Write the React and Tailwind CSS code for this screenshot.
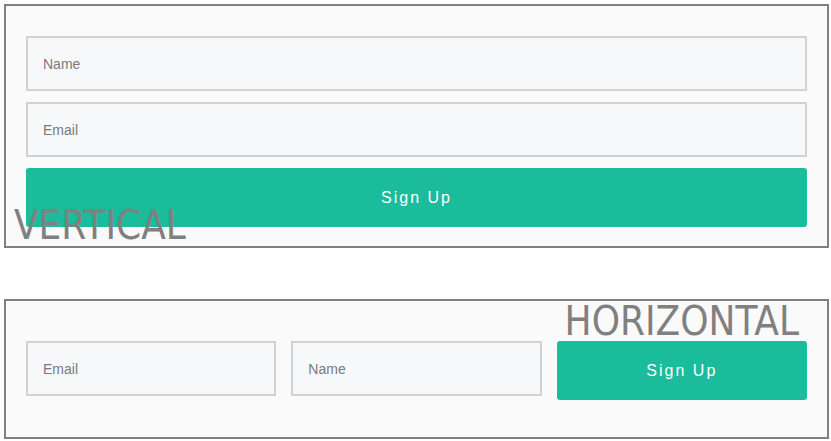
import React from "react";

const inputCls =
  "block w-full h-[55px] border-2 border-[#d1d1d1] bg-[#f7f8fa] px-[15px] text-[14px] text-[#555] outline-none placeholder:text-[#7a7a7a]";

const buttonCls =
  "block w-full h-[59px] rounded-[3px] bg-[#1abc9c] text-white text-[16px] tracking-[2px]";

const labelFont = { fontFamily: '"DejaVu Sans Condensed", "DejaVu Sans", sans-serif' };

export default function App() {
  return (
    <div
      className="min-h-screen bg-white pt-1 pl-1"
      style={{ fontFamily: '"Liberation Sans", Arial, sans-serif' }}
    >
      {/* vertical form */}
      <div className="relative w-[825px] border-2 border-[#808080] bg-[#fafafa] px-5 pt-[30px] pb-[19px]">
        <form className="flex flex-col gap-[11px]" onSubmit={(e) => e.preventDefault()}>
          <input type="text" placeholder="Name" className={inputCls} />
          <input type="email" placeholder="Email" className={inputCls} />
          <button type="submit" className={buttonCls}>
            Sign Up
          </button>
        </form>
        <span
          className="absolute left-2 bottom-[1px] text-[40px] leading-none text-[#808080]"
          style={labelFont}
        >
          VERTICAL
        </span>
      </div>

      {/* horizontal form */}
      <div className="relative mt-[51px] w-[825px] border-2 border-[#808080] bg-[#fafafa] px-5 pt-10 pb-[37px]">
        <form className="grid grid-cols-3 items-start gap-[15px]" onSubmit={(e) => e.preventDefault()}>
          <input type="email" placeholder="Email" className={inputCls} />
          <input type="text" placeholder="Name" className={inputCls} />
          <button type="submit" className={buttonCls}>
            Sign Up
          </button>
        </form>
        <span
          className="absolute right-[28px] top-0 text-[40px] leading-none text-[#808080]"
          style={labelFont}
        >
          HORIZONTAL
        </span>
      </div>
    </div>
  );
}
